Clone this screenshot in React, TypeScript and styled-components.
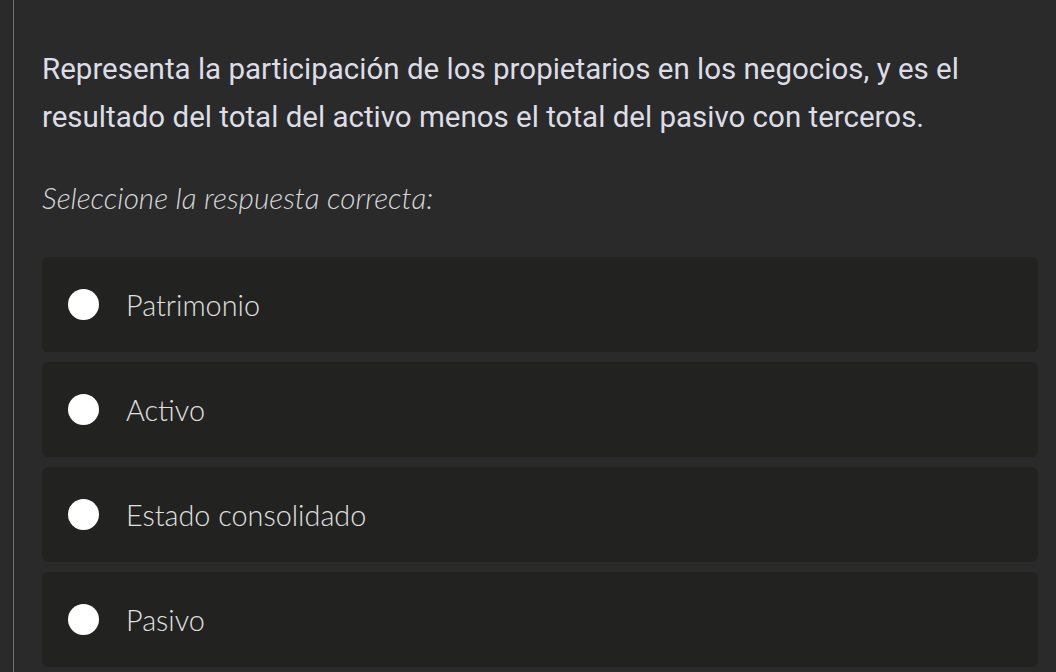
import React from "react";
import styled, { createGlobalStyle } from "styled-components";

const Global = createGlobalStyle`
  html, body { margin: 0; padding: 0; background: #2a2a2b; }
  body { width: 1056px; height: 672px; overflow: hidden; }
`;

const Page = styled.div`
  position: relative;
  width: 1056px;
  height: 672px;
  background: #2a2a2b;
  display: flex;
`;

const Rule = styled.div`
  width: 1px;
  margin-left: 13px;
  background: #6f6f70;
  flex: none;
`;

const Content = styled.div`
  flex: 1;
  padding: 45px 18px 0 28px;
  display: flex;
  flex-direction: column;
`;

const Question = styled.p`
  margin: 0;
  font-family: Roboto, "Liberation Sans", sans-serif;
  font-size: 29.5px;
  font-weight: 400;
  line-height: 48px;
  color: #dcdde6;
  white-space: nowrap;
`;

const Prompt = styled.p`
  margin: 39px 0 0 0;
  font-family: Lato, "Open Sans", sans-serif;
  font-style: italic;
  font-weight: 300;
  font-size: 29.7px;
  line-height: 36px;
  color: #d6d6da;
`;

const Options = styled.div`
  margin-top: 41px;
  display: flex;
  flex-direction: column;
  gap: 10px;
`;

const Option = styled.div`
  height: 95px;
  background: #222321;
  border-radius: 6px;
  display: flex;
  align-items: center;
  padding-left: 26px;
  gap: 27px;
`;

const Radio = styled.span`
  width: 31px;
  height: 31px;
  border-radius: 50%;
  background: #ffffff;
  flex: none;
`;

const Label = styled.span`
  font-family: Lato, "Open Sans", sans-serif;
  font-weight: 300;
  font-size: 28.8px;
  color: #e0e0e0;
`;

const answers = ["Patrimonio", "Activo", "Estado consolidado", "Pasivo"];

export default function App() {
  return (
    <>
      <Global />
      <Page>
        <Rule />
        <Content>
          <Question>
            Representa la participación de los propietarios en los negocios, y es el
            <br />
            resultado del total del activo menos el total del pasivo con terceros.
          </Question>
          <Prompt>Seleccione la respuesta correcta:</Prompt>
          <Options>
            {answers.map((a) => (
              <Option key={a}>
                <Radio />
                <Label>{a}</Label>
              </Option>
            ))}
          </Options>
        </Content>
      </Page>
    </>
  );
}
